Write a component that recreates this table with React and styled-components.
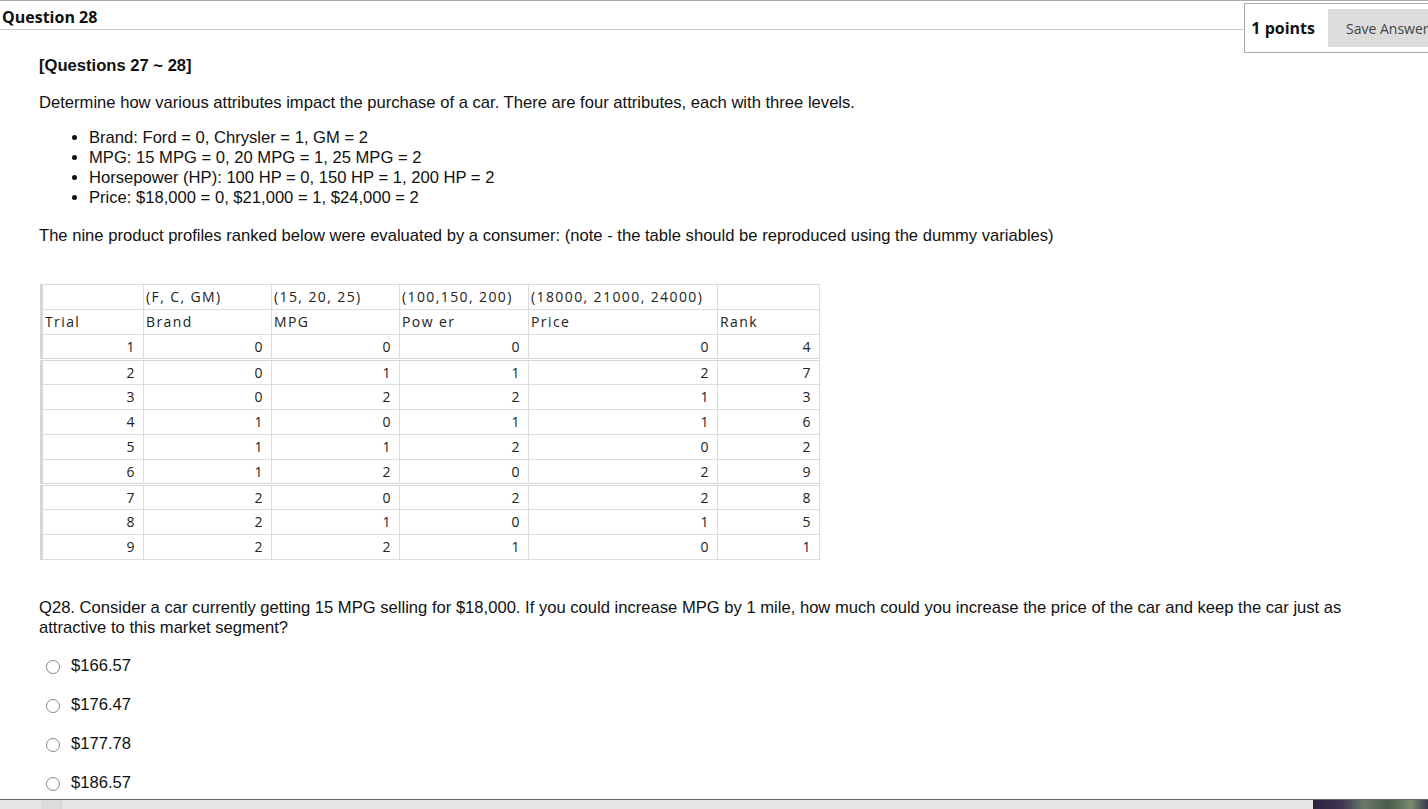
import React from "react";
import styled, { createGlobalStyle } from "styled-components";

const GlobalStyle = createGlobalStyle`
  html, body {
    margin: 0;
    padding: 0;
    background: #fff;
    overflow: hidden;
  }
`;

const Page = styled.div`
  display: flex;
  flex-direction: column;
  height: 809px;
  font-family: Arial, "Liberation Sans", sans-serif;
  color: #111;
`;

const Header = styled.div`
  display: flex;
  align-items: flex-start;
  border-top: 1px solid #aaa;
  height: 53px;
`;

const TitleBar = styled.div`
  flex: 1;
  height: 28px;
  border-bottom: 1px solid #c8c8c8;
  padding-left: 2px;
  font-family: "Open Sans", sans-serif;
  font-weight: 700;
  font-size: 16px;
  line-height: 32px;
  color: #111;
`;

const PointsBox = styled.div`
  display: flex;
  align-items: center;
  gap: 13px;
  margin-top: 2px;
  height: 48px;
  padding-left: 6px;
  border: 1px solid #aaa;
  border-right: none;
  font-family: "Open Sans", sans-serif;
`;

const Points = styled.span`
  font-weight: 700;
  font-size: 16px;
  color: #111;
`;

const SaveButton = styled.button`
  height: 38px;
  width: 100px;
  padding: 0 0 0 18px;
  text-align: left;
  border: none;
  background: #dcdcdc;
  font-family: "Open Sans", sans-serif;
  font-size: 14px;
  color: #444;
  white-space: nowrap;
  overflow: hidden;
`;

const Main = styled.div`
  flex: 1;
  overflow: hidden;
  padding: 2px 0 0 39px;
  font-size: 16.6px;
  line-height: 20px;
`;

const Para = styled.p`
  margin: ${(p) => p.$top || 0}px 0 0;
  font-weight: ${(p) => (p.$bold ? 700 : 400)};
  max-width: 1330px;
`;

const List = styled.ul`
  margin: 15px 0 0;
  padding-left: 50px;
`;

const Grid = styled.table`
  margin: 38px 0 0 1px;
  border-collapse: collapse;
  border-left: 3px solid #d6d6d6;
  font-family: "Open Sans", sans-serif;
  font-size: 14px;
  letter-spacing: 1.4px;
  color: #222;
  table-layout: fixed;
`;

const Row = styled.tr`
  height: 25px;
  border-bottom: ${(p) => (p.$thick ? "3px double #d6d6d6" : "1px solid #dcdcdc")};
`;

const Cell = styled.td`
  border: 1px solid #dcdcdc;
  padding: 0 ${(p) => (p.$num ? "7px" : "4px")} 0 ${(p) => (p.$num ? "4px" : "2px")};
  text-align: ${(p) => (p.$num ? "right" : "left")};
  white-space: nowrap;
  line-height: 22px;
`;

const Options = styled.div`
  display: flex;
  flex-direction: column;
  gap: 19px;
  margin-top: 18px;
`;

const Option = styled.label`
  display: flex;
  align-items: center;
  gap: 11px;
  padding-left: 7px;
`;

const Radio = styled.span`
  width: 12px;
  height: 12px;
  border: 1px solid #888;
  border-radius: 50%;
  margin-top: 2px;
`;

const Footer = styled.div`
  display: flex;
  height: 9px;
  border-top: 1px solid #666;
  background: #e7e7e7;
`;

const FooterTab = styled.div`
  width: ${(p) => p.$w}px;
  background: ${(p) => p.$bg};
  border-right: ${(p) => (p.$line ? "1px solid #d0d0d0" : "none")};
`;

const FooterImage = styled.div`
  margin-left: auto;
  width: 115px;
  background: linear-gradient(90deg, #2d2440 0%, #3d3554 25%, #6a7a68 45%, #4a5a4c 65%, #7a8b72 85%, #3a3a4a 100%);
`;

const widths = [102, 128, 128, 129, 189, 102];

const header1 = ["", "(F, C, GM)", "(15, 20, 25)", "(100,150, 200)", "(18000, 21000, 24000)", ""];
const header2 = ["Trial", "Brand", "MPG", "Pow er", "Price", "Rank"];

const rows = [
  [1, 0, 0, 0, 0, 4],
  [2, 0, 1, 1, 2, 7],
  [3, 0, 2, 2, 1, 3],
  [4, 1, 0, 1, 1, 6],
  [5, 1, 1, 2, 0, 2],
  [6, 1, 2, 0, 2, 9],
  [7, 2, 0, 2, 2, 8],
  [8, 2, 1, 0, 1, 5],
  [9, 2, 2, 1, 0, 1],
];

const answers = ["$166.57", "$176.47", "$177.78", "$186.57"];

const App = () => {
  return (
    <Page>
      <GlobalStyle />
      <Header>
        <TitleBar>Question 28</TitleBar>
        <PointsBox>
          <Points>1 points</Points>
          <SaveButton>Save Answer</SaveButton>
        </PointsBox>
      </Header>
      <Main>
        <Para $bold>[Questions 27 ~ 28]</Para>
        <Para $top={17}>
          Determine how various attributes impact the purchase of a car. There are four attributes, each with three levels.
        </Para>
        <List>
          <li>Brand: Ford = 0, Chrysler = 1, GM = 2</li>
          <li>MPG: 15 MPG = 0, 20 MPG = 1, 25 MPG = 2</li>
          <li>Horsepower (HP): 100 HP = 0, 150 HP = 1, 200 HP = 2</li>
          <li>Price: $18,000 = 0, $21,000 = 1, $24,000 = 2</li>
        </List>
        <Para $top={18}>
          The nine product profiles ranked below were evaluated by a consumer: (note - the table should be reproduced using the dummy variables)
        </Para>
        <Grid>
          <colgroup>
            {widths.map((w, i) => (
              <col key={i} style={{ width: w }} />
            ))}
          </colgroup>
          <tbody>
            <Row>
              {header1.map((h, i) => (
                <Cell key={i}>{h}</Cell>
              ))}
            </Row>
            <Row>
              {header2.map((h, i) => (
                <Cell key={i}>{h}</Cell>
              ))}
            </Row>
            {rows.map((r, i) => (
              <Row key={i} $thick={i === 0 || i === 5}>
                {r.map((v, j) => (
                  <Cell key={j} $num>
                    {v}
                  </Cell>
                ))}
              </Row>
            ))}
          </tbody>
        </Grid>
        <Para $top={38}>
          Q28. Consider a car currently getting 15 MPG selling for $18,000. If you could increase MPG by 1 mile, how much could you increase the price of the car and keep the car just as attractive to this market segment?
        </Para>
        <Options>
          {answers.map((a) => (
            <Option key={a}>
              <Radio />
              {a}
            </Option>
          ))}
        </Options>
      </Main>
      <Footer>
        <FooterTab $w={41} $bg="#e7e7e7" />
        <FooterTab $w={20} $bg="#dcdcdc" $line />
        <FooterImage />
      </Footer>
    </Page>
  );
};

export default App;
